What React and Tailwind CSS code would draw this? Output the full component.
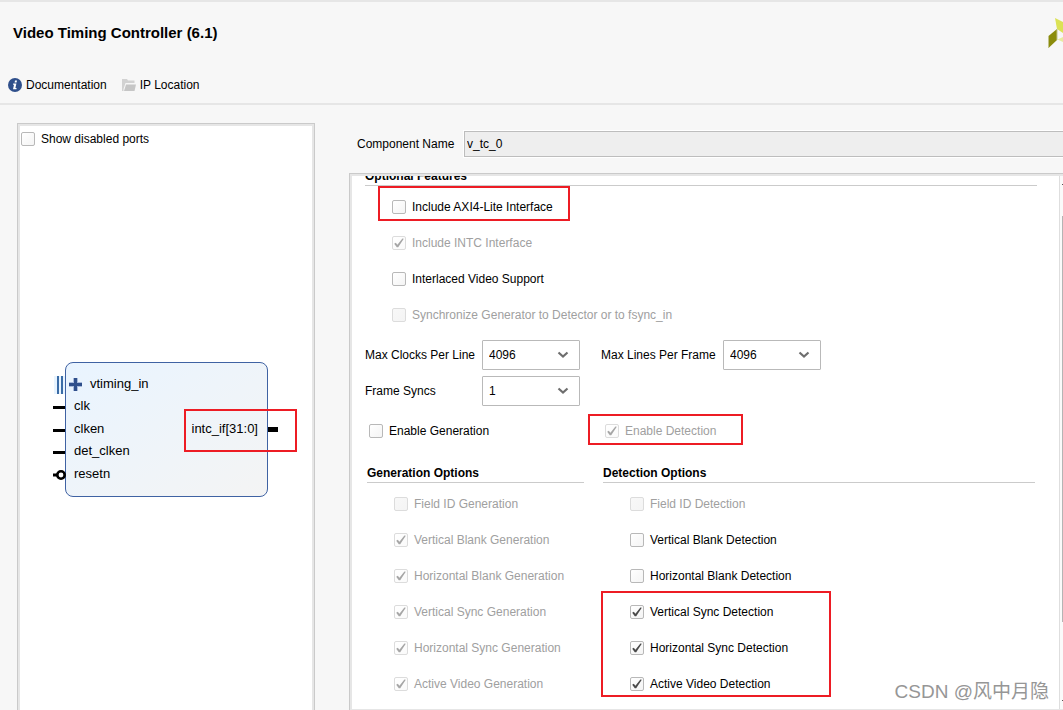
import React, { useState } from 'react';

const optionalFeatures = [
  { id: 'axi4lite', label: 'Include AXI4-Lite Interface', marked: true },
  { id: 'intc', label: 'Include INTC Interface', checked: true, disabled: true },
  { id: 'interlaced', label: 'Interlaced Video Support' },
  { id: 'fsync', label: 'Synchronize Generator to Detector or to fsync_in', disabled: true },
];

const generationOptions = [
  { id: 'gen-field', label: 'Field ID Generation', disabled: true },
  { id: 'gen-vblank', label: 'Vertical Blank Generation', checked: true, disabled: true },
  { id: 'gen-hblank', label: 'Horizontal Blank Generation', checked: true, disabled: true },
  { id: 'gen-vsync', label: 'Vertical Sync Generation', checked: true, disabled: true },
  { id: 'gen-hsync', label: 'Horizontal Sync Generation', checked: true, disabled: true },
  { id: 'gen-active', label: 'Active Video Generation', checked: true, disabled: true },
];

const detectionOptions = [
  { id: 'det-field', label: 'Field ID Detection', disabled: true },
  { id: 'det-vblank', label: 'Vertical Blank Detection' },
  { id: 'det-hblank', label: 'Horizontal Blank Detection' },
];

const syncDetectionOptions = [
  { id: 'det-vsync', label: 'Vertical Sync Detection', checked: true },
  { id: 'det-hsync', label: 'Horizontal Sync Detection', checked: true },
  { id: 'det-active', label: 'Active Video Detection', checked: true },
];

const inputPorts = [
  { name: 'vtiming_in', kind: 'bus' },
  { name: 'clk', kind: 'pin' },
  { name: 'clken', kind: 'pin' },
  { name: 'det_clken', kind: 'pin' },
  { name: 'resetn', kind: 'inverted' },
];

function CheckOption({ id, label, checked = false, disabled = false }) {
  const [on, setOn] = useState(checked);

  return (
    <label
      htmlFor={id}
      className={`inline-flex items-center gap-1.5 whitespace-nowrap ${disabled ? 'text-[#a0a0a0]' : 'text-black'}`}
    >
      <span className="relative size-3.5 shrink-0">
        <input
          id={id}
          type="checkbox"
          checked={on}
          disabled={disabled}
          onChange={(e) => setOn(e.target.checked)}
          className="block size-3.5 appearance-none rounded-[2px] border border-[#b8b8b8] bg-linear-to-br from-white to-[#f4f4f4] disabled:border-[#dcdcdc] disabled:from-[#f8f8f8] disabled:checked:from-white disabled:checked:to-[#fafafa]"
        />
        {on && (
          <svg viewBox="0 0 14 14" className="pointer-events-none absolute inset-0 size-3.5">
            <path
              d="M2.2 7.8 L3.8 6.8 L5.4 8.8 L10.4 2.4 L11.8 2.8 L6.2 11.2 L4.8 11.2 Z"
              fill={disabled ? '#a6a6a6' : '#4a4a4a'}
            />
          </svg>
        )}
      </span>
      {label}
    </label>
  );
}

function OptionRow({ option, children }) {
  return (
    <div className="relative flex h-9 items-center pl-[27px]">
      <CheckOption {...option} />
      {children}
    </div>
  );
}

function SelectBox({ id, value, options }) {
  const [current, setCurrent] = useState(value);

  return (
    <div className="relative w-[98px]">
      <select
        id={id}
        value={current}
        onChange={(e) => setCurrent(e.target.value)}
        className="block h-[30px] w-full appearance-none rounded-[1px] border border-[#b9b9b9] bg-white pl-1.5 text-xs text-black"
      >
        {options.map((o) => (
          <option key={o}>{o}</option>
        ))}
      </select>
      <svg viewBox="0 0 12 8" className="pointer-events-none absolute top-[11px] right-[11px] h-2 w-3">
        <path d="M1.5 1.5 L6 5.5 L10.5 1.5" fill="none" stroke="#6e6e6e" strokeWidth="2.2" />
      </svg>
    </div>
  );
}

function SectionTitle({ children }) {
  return <h2 className="border-b border-[#cbcbcb] pb-px text-xs leading-4 font-bold">{children}</h2>;
}

// Red marker frame drawn over the controls it points at
function Marker({ className }) {
  return <span className={`pointer-events-none absolute border-2 border-[#ed1c24] ${className}`} />;
}

function PortPin({ kind }) {
  if (kind === 'bus') {
    return (
      <svg viewBox="0 0 11 18" className="absolute top-0.5 -left-3 h-[18px] w-[11px]">
        <rect width="11" height="18" fill="#e8f4ff" />
        <path d="M4 0 V18 M8 0 V18" stroke="#3b6ca6" strokeWidth="2" />
      </svg>
    );
  }
  if (kind === 'inverted') {
    return (
      <svg viewBox="0 0 13 12" className="absolute top-[5px] -left-[13px] h-3 w-[13px]">
        <path d="M0 6 H4" stroke="#000" strokeWidth="3" />
        <circle cx="8" cy="6" r="3.7" fill="#fff" stroke="#000" strokeWidth="2.6" />
      </svg>
    );
  }
  return <span className="absolute top-[10px] -left-[13px] h-[3px] w-3 bg-black" />;
}

function BlockSymbol() {
  return (
    <div className="relative ml-[45px] flex h-[135px] w-[203px] items-center rounded-lg border border-[#3f62a3] bg-linear-to-br from-[#e9f4ff] to-[#f4f4f4] text-[13px]">
      <ul className="flex h-[112px] flex-1 flex-col justify-between">
        {inputPorts.map((port) => (
          <li key={port.name} className="relative flex h-[22px] items-center">
            <PortPin kind={port.kind} />
            {port.kind === 'bus' && (
              <button type="button" aria-label="Expand vtiming_in" className="ml-[3px] size-[13px]">
                <svg viewBox="0 0 13 13" className="size-[13px]">
                  <path d="M6.5 0 V13 M0 6.5 H13" stroke="#a9bbdc" strokeWidth="5" />
                  <path d="M6.5 0 V13 M0 6.5 H13" stroke="#2f4f8b" strokeWidth="3" />
                </svg>
              </button>
            )}
            <span className="ml-2 pb-0.5">{port.name}</span>
          </li>
        ))}
      </ul>
      <div className="relative pr-[9px] pb-0.5">
        intc_if[31:0]
        <span className="absolute top-[7px] -right-[11px] h-[5px] w-2.5 bg-black" />
      </div>
      <Marker className="top-[46px] left-[118px] h-[43px] w-[113px]" />
    </div>
  );
}

function Header() {
  return (
    <header className="border-y-2 border-[#e6e6e6] pb-2">
      <div className="flex items-start justify-between pt-4">
        <h1 className="pt-1 pl-[13px] text-[15px] leading-[22px] font-bold">Video Timing Controller (6.1)</h1>
        <svg viewBox="0 0 15 30" className="h-[30px] w-[15px]">
          <path d="M7 0 L15 4 V15 L9 11 Z" fill="#dbe255" />
          <path d="M0.5 18 L9 11 V22 L0.5 30 Z" fill="#8b8c0c" />
          <path d="M0.5 18 V30 M9 11 V22" stroke="#c2c38a" strokeWidth="1" />
          <path d="M9.5 21.5 L15 19 V24 Z" fill="#e8eba0" />
        </svg>
      </div>
      <nav className="mt-[27px] flex h-5 items-center gap-[15px] pl-2">
        <a href="#documentation" className="flex items-center gap-1">
          <svg viewBox="0 0 14 14" className="size-3.5">
            <circle cx="7" cy="7" r="7" fill="#2f4f8b" />
            <path d="M7 2.6 H9 L8.6 4.4 H6.6 Z M5.2 5.6 H8.4 L7.4 10 H8.6 L8.4 11.2 H5 L6 6.8 H5 Z" fill="#fff" />
          </svg>
          Documentation
        </a>
        <a href="#location" className="flex items-center gap-1">
          <svg viewBox="0 0 14 12" className="h-3 w-3.5">
            <path d="M0 0 H5 L6 1.5 H12.5 V4 H3.5 L1.5 10 V12 H0 Z" fill="#d2d2d2" />
            <path d="M4 5.5 H14 L12.5 12 H2 Z" fill="#c6c6c6" />
          </svg>
          IP Location
        </a>
      </nav>
    </header>
  );
}

export default function App() {
  return (
    <main className="relative flex h-screen flex-col overflow-hidden bg-[#f7f7f7] font-['Liberation_Sans',Arial,sans-serif] text-xs text-black">
      <Header />

      <div className="flex min-h-0 flex-1 gap-[34px] pl-[17px]">
        {/* Block preview */}
        <section className="mt-[18px] w-[298px] shrink-0 border border-b-0 border-[#cacaca] bg-white">
          <div className="h-full border-2 border-b-0 border-[#e6e6e6]">
            <div className="flex h-[26px] items-center pl-px">
              <CheckOption id="show-disabled" label="Show disabled ports" />
            </div>
            <div className="pt-[210px]">
              <BlockSymbol />
            </div>
          </div>
        </section>

        {/* Settings */}
        <section className="flex min-w-0 flex-1 flex-col pt-[26px]">
          <div className="flex items-center gap-[5px] pl-2">
            <label htmlFor="component-name" className="w-[102px] whitespace-nowrap">
              Component Name
            </label>
            <input
              id="component-name"
              defaultValue="v_tc_0"
              className="h-[26px] min-w-0 flex-1 border border-r-0 border-[#bdbdbd] bg-[#eeeeee] pl-0.5 ring-1 ring-white"
            />
          </div>

          <div className="mt-4 flex min-h-0 flex-1 border-t border-l border-[#cacaca]">
            <div className="flex min-w-0 flex-1 border-t-2 border-b border-l-2 border-[#e6e6e6] bg-white">
              <div className="min-w-0 flex-1 overflow-hidden pr-[22px] pl-[13px]">
                <div className="-mt-2">
                  <SectionTitle>Optional Features</SectionTitle>
                  <div className="pt-[3px]">
                    {optionalFeatures.map((option) => (
                      <OptionRow key={option.id} option={option}>
                        {option.marked && <Marker className="-top-[3px] left-[13px] h-[35px] w-48" />}
                      </OptionRow>
                    ))}
                  </div>

                  <div className="grid grid-cols-[236px_1fr] gap-y-1.5 py-[7px]">
                    <div className="flex items-center">
                      <label htmlFor="max-clocks" className="w-[117px]">Max Clocks Per Line</label>
                      <SelectBox id="max-clocks" value="4096" options={['1024', '2048', '4096', '8192']} />
                    </div>
                    <div className="flex items-center">
                      <label htmlFor="max-lines" className="w-[122px]">Max Lines Per Frame</label>
                      <SelectBox id="max-lines" value="4096" options={['1024', '2048', '4096', '8192']} />
                    </div>
                    <div className="flex items-center">
                      <label htmlFor="frame-syncs" className="w-[117px]">Frame Syncs</label>
                      <SelectBox id="frame-syncs" value="1" options={['1', '2', '4', '8', '16']} />
                    </div>
                  </div>

                  <div className="grid grid-cols-[236px_1fr]">
                    <div className="flex h-9 items-center pl-1">
                      <CheckOption id="enable-generation" label="Enable Generation" />
                    </div>
                    <div className="relative flex h-9 items-center pl-1">
                      <CheckOption id="enable-detection" label="Enable Detection" checked disabled />
                      <Marker className="top-px -left-[13px] h-[31px] w-[155px]" />
                    </div>
                  </div>

                  <div className="grid grid-cols-[217px_1fr] gap-[19px] px-0.5 pt-4">
                    <div>
                      <SectionTitle>Generation Options</SectionTitle>
                      <div className="pt-[3px]">
                        {generationOptions.map((option) => (
                          <OptionRow key={option.id} option={option} />
                        ))}
                      </div>
                    </div>
                    <div>
                      <SectionTitle>Detection Options</SectionTitle>
                      <div className="pt-[3px]">
                        {detectionOptions.map((option) => (
                          <OptionRow key={option.id} option={option} />
                        ))}
                      </div>
                      <div className="relative">
                        {syncDetectionOptions.map((option) => (
                          <OptionRow key={option.id} option={option} />
                        ))}
                        <Marker className="-top-[3px] -left-0.5 h-[106px] w-[230px]" />
                      </div>
                    </div>
                  </div>
                </div>
              </div>

              {/* Scroll track */}
              <div className="flex w-1 flex-col items-end border-l border-[#dedede] bg-[#fafafa] py-2">
                <span className="h-px w-px bg-[#555555]" />
                <span className="mt-[31px] h-[406px] w-px bg-[#b4b4b4]" />
                <span className="mt-auto h-px w-px bg-[#555555]" />
              </div>
            </div>
          </div>
        </section>
      </div>

      <p className="pointer-events-none absolute right-3.5 bottom-1 font-['Liberation_Sans','Noto_Sans_CJK_SC',sans-serif] text-[19px] leading-7 text-[#969696]">
        CSDN @风中月隐
      </p>
    </main>
  );
}
